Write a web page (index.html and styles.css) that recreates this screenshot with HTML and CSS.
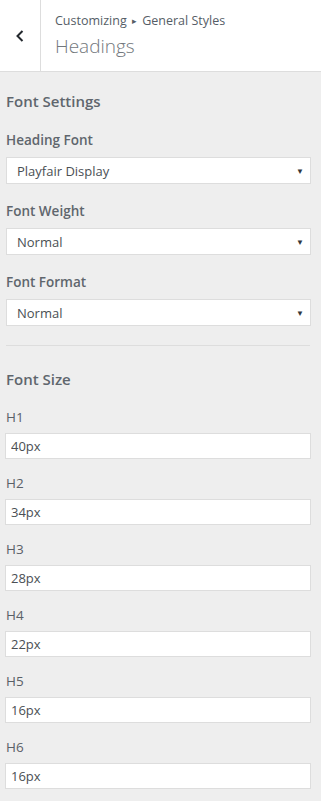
FILE: index.html
```html
<!DOCTYPE html>
<html lang="en">
<head>
    <meta charset="UTF-8">
    <meta name="viewport" content="width=device-width, initial-scale=1.0">
    <title>Headings</title>
    <link rel="stylesheet" href="styles.css">
</head>
<body>
    <div class="panel-header">
        <button class="back-btn" aria-label="Back">
            <svg width="12" height="14" viewBox="0 0 12 14"><path d="M8.5 2 L3.5 7 L8.5 12" fill="none" stroke="#23282d" stroke-width="2"/></svg>
        </button>
        <div class="panel-title">
            <div class="crumbs">Customizing <span class="sep">&#9656;</span> General Styles</div>
            <div class="title">Headings</div>
        </div>
    </div>

    <div class="panel-body">
        <h3 class="section-title">Font Settings</h3>

        <div class="control-list">
            <div class="control">
                <label class="control-label">Heading Font</label>
                <div class="select-box"><span>Playfair Display</span><span class="arrow">&#9660;</span></div>
            </div>
            <div class="control">
                <label class="control-label">Font Weight</label>
                <div class="select-box"><span>Normal</span><span class="arrow">&#9660;</span></div>
            </div>
            <div class="control">
                <label class="control-label">Font Format</label>
                <div class="select-box"><span>Normal</span><span class="arrow">&#9660;</span></div>
            </div>
        </div>

        <hr class="divider">

        <h3 class="section-title size-title">Font Size</h3>

        <div class="size-list">
            <div class="size-control">
                <label class="size-label">H1</label>
                <input type="text" class="text-field" value="40px">
            </div>
            <div class="size-control">
                <label class="size-label">H2</label>
                <input type="text" class="text-field" value="34px">
            </div>
            <div class="size-control">
                <label class="size-label">H3</label>
                <input type="text" class="text-field" value="28px">
            </div>
            <div class="size-control">
                <label class="size-label">H4</label>
                <input type="text" class="text-field" value="22px">
            </div>
            <div class="size-control">
                <label class="size-label">H5</label>
                <input type="text" class="text-field" value="16px">
            </div>
            <div class="size-control">
                <label class="size-label">H6</label>
                <input type="text" class="text-field" value="16px">
            </div>
        </div>
    </div>
</body>
</html>
```

FILE: styles.css
```css
body {
    margin: 0;
    background: #eeeeee;
    font-family: "Open Sans", "Noto Sans", sans-serif;
    color: #555d66;
}

.panel-header {
    display: flex;
    height: 71px;
    background: #ffffff;
    border-bottom: 1px solid #dddddd;
}

.back-btn {
    width: 41px;
    padding: 0;
    border: none;
    border-right: 1px solid #dddddd;
    background: #ffffff;
    display: flex;
    align-items: center;
    justify-content: center;
}

.panel-title {
    padding: 12px 0 0 14px;
}

.crumbs {
    font-size: 12.5px;
    line-height: 18px;
    color: #555d66;
}

.crumbs .sep {
    font-size: 9px;
    margin: 0 2px;
    position: relative;
    top: -1px;
}

.title {
    font-size: 19px;
    line-height: 28px;
    font-weight: 300;
    color: #72777c;
    margin-top: 1px;
}

.panel-body {
    padding: 19px 11px 20px 6px;
}

.section-title {
    margin: 0;
    font-size: 15px;
    font-weight: 600;
    line-height: 20px;
    color: #5f666d;
}

.control-list {
    display: flex;
    flex-direction: column;
    gap: 18px;
    margin-top: 20px;
}

.control-label {
    display: block;
    font-size: 13.5px;
    font-weight: 600;
    line-height: 18px;
    margin-bottom: 8px;
    color: #5f666d;
}

.select-box {
    display: flex;
    justify-content: space-between;
    align-items: center;
    height: 25px;
    margin-right: -1px;
    padding: 0 6px 0 10px;
    background: #ffffff;
    border: 1px solid #dddddd;
    font-size: 13px;
    color: #4a4f54;
}

.select-box .arrow {
    font-size: 8px;
    color: #32373c;
}

.divider {
    margin: 19px 0 0;
    border: none;
    border-top: 1px solid #dddddd;
}

.size-title {
    margin-top: 23px;
}

.size-list {
    display: flex;
    flex-direction: column;
    gap: 15px;
    margin-top: 19px;
}

.size-label {
    display: block;
    font-size: 13.5px;
    font-weight: 500;
    line-height: 18px;
    margin-bottom: 7px;
    color: #5a6067;
}

.text-field {
    display: block;
    box-sizing: border-box;
    width: calc(100% + 2px);
    margin-left: -1px;
    height: 26px;
    padding: 0 5px;
    border: 1px solid #dddddd;
    background: #ffffff;
    font-family: inherit;
    font-size: 13px;
    color: #4a4f54;
}
```
